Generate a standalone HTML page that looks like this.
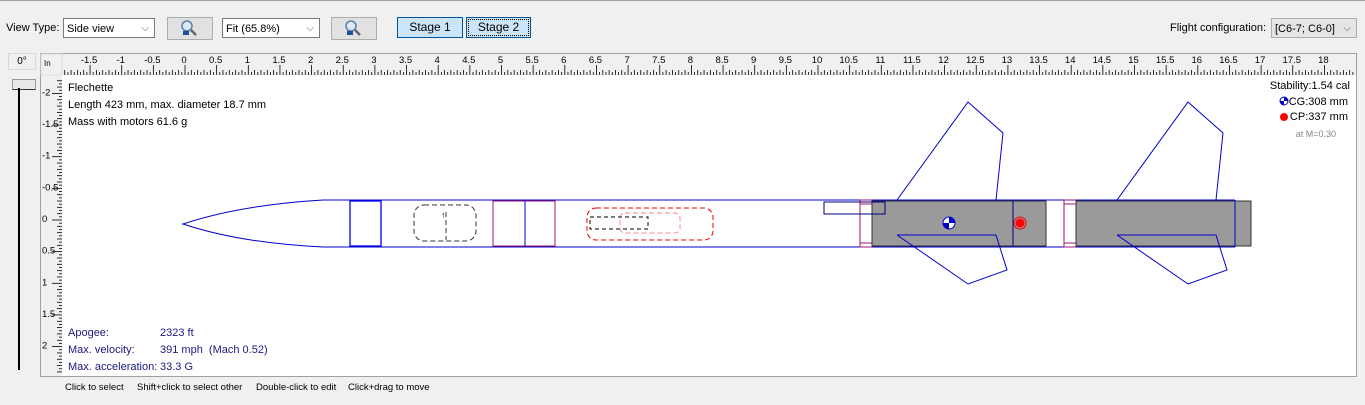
<!DOCTYPE html>
<html><head><meta charset="utf-8"><style>
body{margin:0;width:1365px;height:405px;background:#f0f0f0;font-family:"Liberation Sans",sans-serif;font-size:11px;color:#000;position:relative;overflow:hidden}
.a{position:absolute}
.btn{position:absolute;border:1px solid #adadad;background:#e1e1e1}
.sel{position:absolute;border:1px solid #7a7a7a;background:#fff;height:20px;line-height:20px;padding-left:3px;box-sizing:border-box}
.chev{position:absolute;right:5px;top:0;color:#555;font-size:10px}
</style></head><body>
<div class="a" style="left:0;top:0;width:1365px;height:1px;background:#a0a0a0"></div>
<div class="a" style="left:6px;top:22px">View Type:</div>
<div class="sel" style="left:63px;top:18px;width:92px">Side view<span class="chev">⌵</span></div>
<div class="btn" style="left:167px;top:17px;width:44px;height:21px"></div>
<div class="btn" style="left:331px;top:17px;width:44px;height:21px"></div>
<svg class="a" style="left:180px;top:19px" width="20" height="18"><circle cx="7" cy="7" r="5" fill="#dde8f5" stroke="#5a7fa8" stroke-width="1.5"/><line x1="11" y1="11" x2="16" y2="16" stroke="#666" stroke-width="2.5"/><rect x="3" y="12" width="6" height="4" fill="#1d4f9a"/></svg>
<svg class="a" style="left:344px;top:19px" width="20" height="18"><circle cx="7" cy="7" r="5" fill="#dde8f5" stroke="#5a7fa8" stroke-width="1.5"/><line x1="11" y1="11" x2="16" y2="16" stroke="#666" stroke-width="2.5"/><rect x="3" y="12" width="6" height="4" fill="#1d4f9a"/></svg>
<div class="sel" style="left:222px;top:18px;width:98px">Fit (65.8%)<span class="chev">⌵</span></div>
<div class="a" style="left:397px;top:17px;width:66px;height:21px;background:#cce4f7;border:1px solid #005499;box-sizing:border-box;text-align:center;line-height:19px;font-size:12px">Stage 1</div>
<div class="a" style="left:466px;top:17px;width:65px;height:21px;background:#cce4f7;border:1px solid #005499;box-sizing:border-box;text-align:center;line-height:19px;font-size:12px"><div style="border:1px dotted #000;margin:1px;line-height:15px">Stage 2</div></div>
<div class="a" style="left:1170px;top:22px">Flight configuration:</div>
<div class="sel" style="left:1271px;top:18px;width:86px;background:#e5e5e5;border-color:#adadad">[C6-7; C6-0]<span class="chev">⌵</span></div>

<div class="a" style="left:8px;top:53px;width:26px;height:15px;border:1px solid #d9d9d9;text-align:center;line-height:15px;font-size:10px">0°</div>
<div class="a" style="left:12px;top:79px;width:22px;height:9px;background:#e8e8e8;border:1px solid #999;border-bottom-color:#333"></div>
<div class="a" style="left:18px;top:88px;width:2px;height:282px;background:#000"></div>

<div class="a" style="left:40px;top:53px;width:1317px;height:324px;border:1px solid #a0a0a0;box-sizing:border-box;background:#fff"></div>
<svg id="r" class="a" style="left:0;top:0" width="1365" height="405" font-family="Liberation Sans" font-size="9.5"></svg>

<div class="a" style="left:68px;top:80px;line-height:17px">Flechette<br>Length 423 mm, max. diameter 18.7 mm<br>Mass with motors 61.6 g</div>
<div class="a" style="left:1200px;top:80px;width:150px;text-align:right">Stability:1.54 cal</div>
<div class="a" style="left:1200px;top:96px;width:148px;text-align:right">CG:308 mm</div>
<div class="a" style="left:1200px;top:111px;width:148px;text-align:right">CP:337 mm</div>
<div class="a" style="left:1200px;top:129px;width:136px;text-align:right;font-size:9px;color:#888">at M=0.30</div>
<div class="a" style="left:68px;top:325px;line-height:17px;color:#1a1a80">Apogee:<br>Max. velocity:<br>Max. acceleration:</div>
<div class="a" style="left:160px;top:325px;line-height:17px;color:#1a1a80">2323 ft<br>391 mph &nbsp;(Mach 0.52)<br>33.3 G</div>
<div class="a" style="left:65px;top:382px;font-size:9.5px">Click to select</div>
<div class="a" style="left:137px;top:382px;font-size:9.5px">Shift+click to select other</div>
<div class="a" style="left:256px;top:382px;font-size:9.5px">Double-click to edit</div>
<div class="a" style="left:348px;top:382px;font-size:9.5px">Click+drag to move</div>
<script>
var s=document.getElementById('r'),h='';
h+='<rect x="41" y="54" width="1315" height="21" fill="#f0f0f0"/><rect x="41" y="54" width="21" height="322" fill="#f0f0f0"/><rect x="41" y="54" width="21" height="21" fill="#f0f0f0" stroke="#ddd"/><text x="44" y="66" font-size="8">In</text>';
var px=63.3;
for(var i=-40;i<=380;i++){var x=185+i*px/20;if(x<63||x>1355)continue;var L=i%10==0?10:(i%2==0?5:3);h+='<line x1="'+x+'" y1="75" x2="'+x+'" y2="'+(75-L)+'" stroke="#000" stroke-width="0.8"/>';if(i%10==0){var v=i/20;h+='<text x="'+(x-1)+'" y="63" text-anchor="middle">'+v+'</text>';}}
for(var j=-44;j<=48;j++){var y=220+j*px/20;if(y<76||y>375)continue;var L=j%10==0?10:(j%2==0?5:3);h+='<line x1="62" y1="'+y+'" x2="'+(62-L)+'" y2="'+y+'" stroke="#000" stroke-width="0.8"/>';if(j%10==0){h+='<text x="42" y="'+(y+2)+'">'+(j/20)+'</text>';}}
h+='<path d="M323 200 Q240 205 183 224 Q240 243 323 247" fill="none" stroke="#0000cc"/>';
h+='<line x1="323" y1="200" x2="1235" y2="200" stroke="#0000cc"/><line x1="323" y1="247" x2="1235" y2="247" stroke="#0000cc"/>';
h+='<rect x="350" y="201" width="31" height="45" fill="none" stroke="#0000ee" stroke-width="1.3"/>';
h+='<rect x="414" y="205" width="62" height="36" rx="10" fill="none" stroke="#333" stroke-dasharray="5,3"/><line x1="446" y1="212" x2="446" y2="240" stroke="#333" stroke-dasharray="5,3"/><text x="441" y="218" font-size="9">↑</text>';
h+='<rect x="493" y="201" width="62" height="45" fill="none" stroke="#a0146e"/><line x1="525" y1="201" x2="525" y2="246" stroke="#0000cc"/>';
h+='<rect x="587" y="208" width="126" height="32" rx="9" fill="none" stroke="#e00" stroke-dasharray="5,3"/><rect x="620" y="213" width="60" height="20" rx="5" fill="none" stroke="#f88" stroke-dasharray="5,3"/><rect x="590" y="217" width="58" height="12" fill="none" stroke="#000" stroke-dasharray="4,3"/>';
function fin(o){return '<polyline points="'+(897+o)+',200 '+(968+o)+',102 '+(1003+o)+',133 '+(996+o)+',200" fill="none" stroke="#0000cc"/><polyline points="'+(897+o)+',235 '+(968+o)+',284 '+(1007+o)+',270 '+(996+o)+',235 '+(897+o)+',235" fill="none" stroke="#0000cc"/>';}
h+='<rect x="860" y="200" width="12" height="47" fill="#fff" stroke="#a0146e"/><line x1="860" y1="204" x2="872" y2="204" stroke="#a0146e"/><line x1="860" y1="243" x2="872" y2="243" stroke="#a0146e"/>';
h+='<rect x="1064" y="200" width="12" height="47" fill="#fff" stroke="#a0146e"/><line x1="1064" y1="204" x2="1076" y2="204" stroke="#a0146e"/><line x1="1064" y1="243" x2="1076" y2="243" stroke="#a0146e"/>';
h+='<rect x="872" y="201" width="174" height="45" fill="#9a9a9a" stroke="#333"/><rect x="1076" y="201" width="175" height="45" fill="#9a9a9a" stroke="#333"/>';
h+='<line x1="1013" y1="201" x2="1013" y2="246" stroke="#000080"/>';
h+='<line x1="872" y1="200" x2="1046" y2="200" stroke="#0000cc"/><line x1="872" y1="247" x2="1046" y2="247" stroke="#0000cc"/><line x1="1076" y1="200" x2="1235" y2="200" stroke="#0000cc"/><line x1="1076" y1="247" x2="1235" y2="247" stroke="#0000cc"/><line x1="1235" y1="200" x2="1235" y2="247" stroke="#0000cc"/>';
h+=fin(0)+fin(220);
h+='<rect x="824" y="202" width="61" height="12" fill="none" stroke="#000080"/>';
h+='<circle cx="949" cy="223" r="6" fill="#fff" stroke="#0000cc"/><path d="M949 223 L949 217 A6 6 0 0 1 955 223Z M949 223 L943 223 A6 6 0 0 0 949 229Z" fill="#0000cc"/>';
h+='<circle cx="1020" cy="223" r="6" fill="none" stroke="#e00"/><circle cx="1020" cy="223" r="4.5" fill="#f00"/>';
h+='<circle cx="1284" cy="101" r="4" fill="#fff" stroke="#0000cc"/><path d="M1284 101 L1284 97 A4 4 0 0 1 1288 101Z M1284 101 L1280 101 A4 4 0 0 0 1284 105Z" fill="#0000cc"/><circle cx="1284" cy="117" r="4" fill="#f00"/>';
s.innerHTML=h;
</script>
</body></html>
